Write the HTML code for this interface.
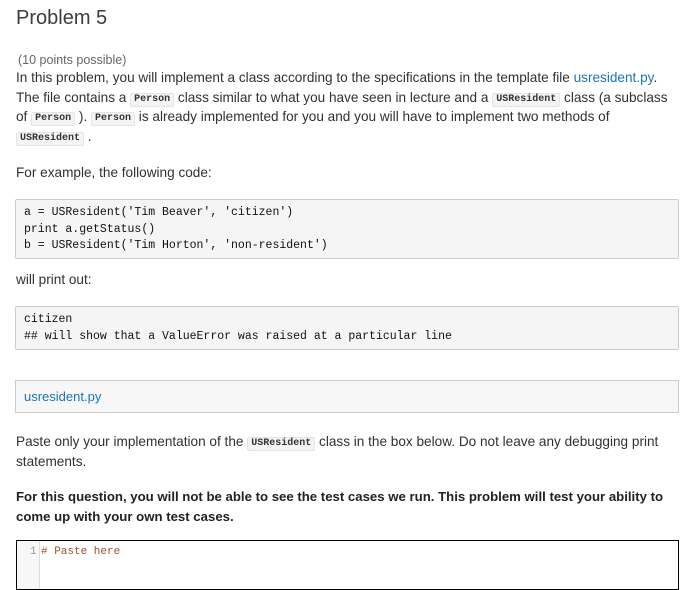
<!DOCTYPE html>
<html><head><style>
body{margin:0;background:#fff;font-family:"Liberation Sans",sans-serif;color:#313131;width:697px;height:577px;overflow:hidden;position:relative}
.a{position:absolute;left:16px;white-space:nowrap}
h1{position:absolute;left:16px;top:7px;margin:0;font-weight:normal;font-size:20px;color:#3c3c3c}
.t{font-size:13.6px;line-height:19.5px}
code{font-family:"Liberation Mono",monospace;font-size:10px;line-height:12px;font-weight:bold;background:#f4f4f4;border:1px solid #e4e4e4;border-radius:2px;padding:0 3px;color:#333;display:inline-block;vertical-align:1px}
.pre{position:absolute;left:15px;width:664px;background:#f5f5f5;border:1px solid #ccc;border-radius:2px;font-family:"Liberation Mono",monospace;font-size:11.5px;line-height:16.5px;color:#111;padding:5px 8px;box-sizing:border-box;white-space:pre}
a{color:#1b75bb;text-decoration:none}
</style></head><body>
<h1>Problem 5</h1>
<div class="a t" style="top:51px;font-size:12.5px;color:#666;left:18px">(10 points possible)</div>
<div class="a t" style="top:68px">In this problem, you will implement a class according to the specifications in the template file <a>usresident.py</a>.<br>The file contains a <code>Person</code> class similar to what you have seen in lecture and a <code>USResident</code> class (a subclass<br>of <code>Person</code> ). <code>Person</code> is already implemented for you and you will have to implement two methods of<br><code>USResident</code> .</div>
<div class="a t" style="top:163px">For example, the following code:</div>
<div class="pre" style="top:199px;height:60px">a = USResident('Tim Beaver', 'citizen')
print a.getStatus()
b = USResident('Tim Horton', 'non-resident')</div>
<div class="a t" style="top:270px">will print out:</div>
<div class="pre" style="top:306px;height:44px">citizen
## will show that a ValueError was raised at a particular line</div>
<div style="position:absolute;left:15px;top:380px;width:664px;height:33px;box-sizing:border-box;border:1px solid #ccc;background:#f7f7f7;padding:8px 8px;font-size:13px"><a>usresident.py</a></div>
<div class="a t" style="top:432px">Paste only your implementation of the <code>USResident</code> class in the box below. Do not leave any debugging print<br>statements.</div>
<div class="a t" style="top:487px;font-weight:bold;color:#222;font-size:13.2px">For this question, you will not be able to see the test cases we run. This problem will test your ability to<br>come up with your own test cases.</div>
<div style="position:absolute;left:16px;top:540px;width:663px;height:50px;border:1px solid #000;box-sizing:border-box">
<div style="position:absolute;left:0;top:0;width:22px;height:100%;background:#f7f7f7;border-right:1px solid #ddd"></div>
<div style="position:absolute;left:13px;top:5px;font-family:'Liberation Mono',monospace;font-size:11px;color:#999">1</div>
<div style="position:absolute;left:24px;top:5px;font-family:'Liberation Mono',monospace;font-size:11px;color:#a0522d">#&nbsp;Paste here</div>
</div>
</body></html>
